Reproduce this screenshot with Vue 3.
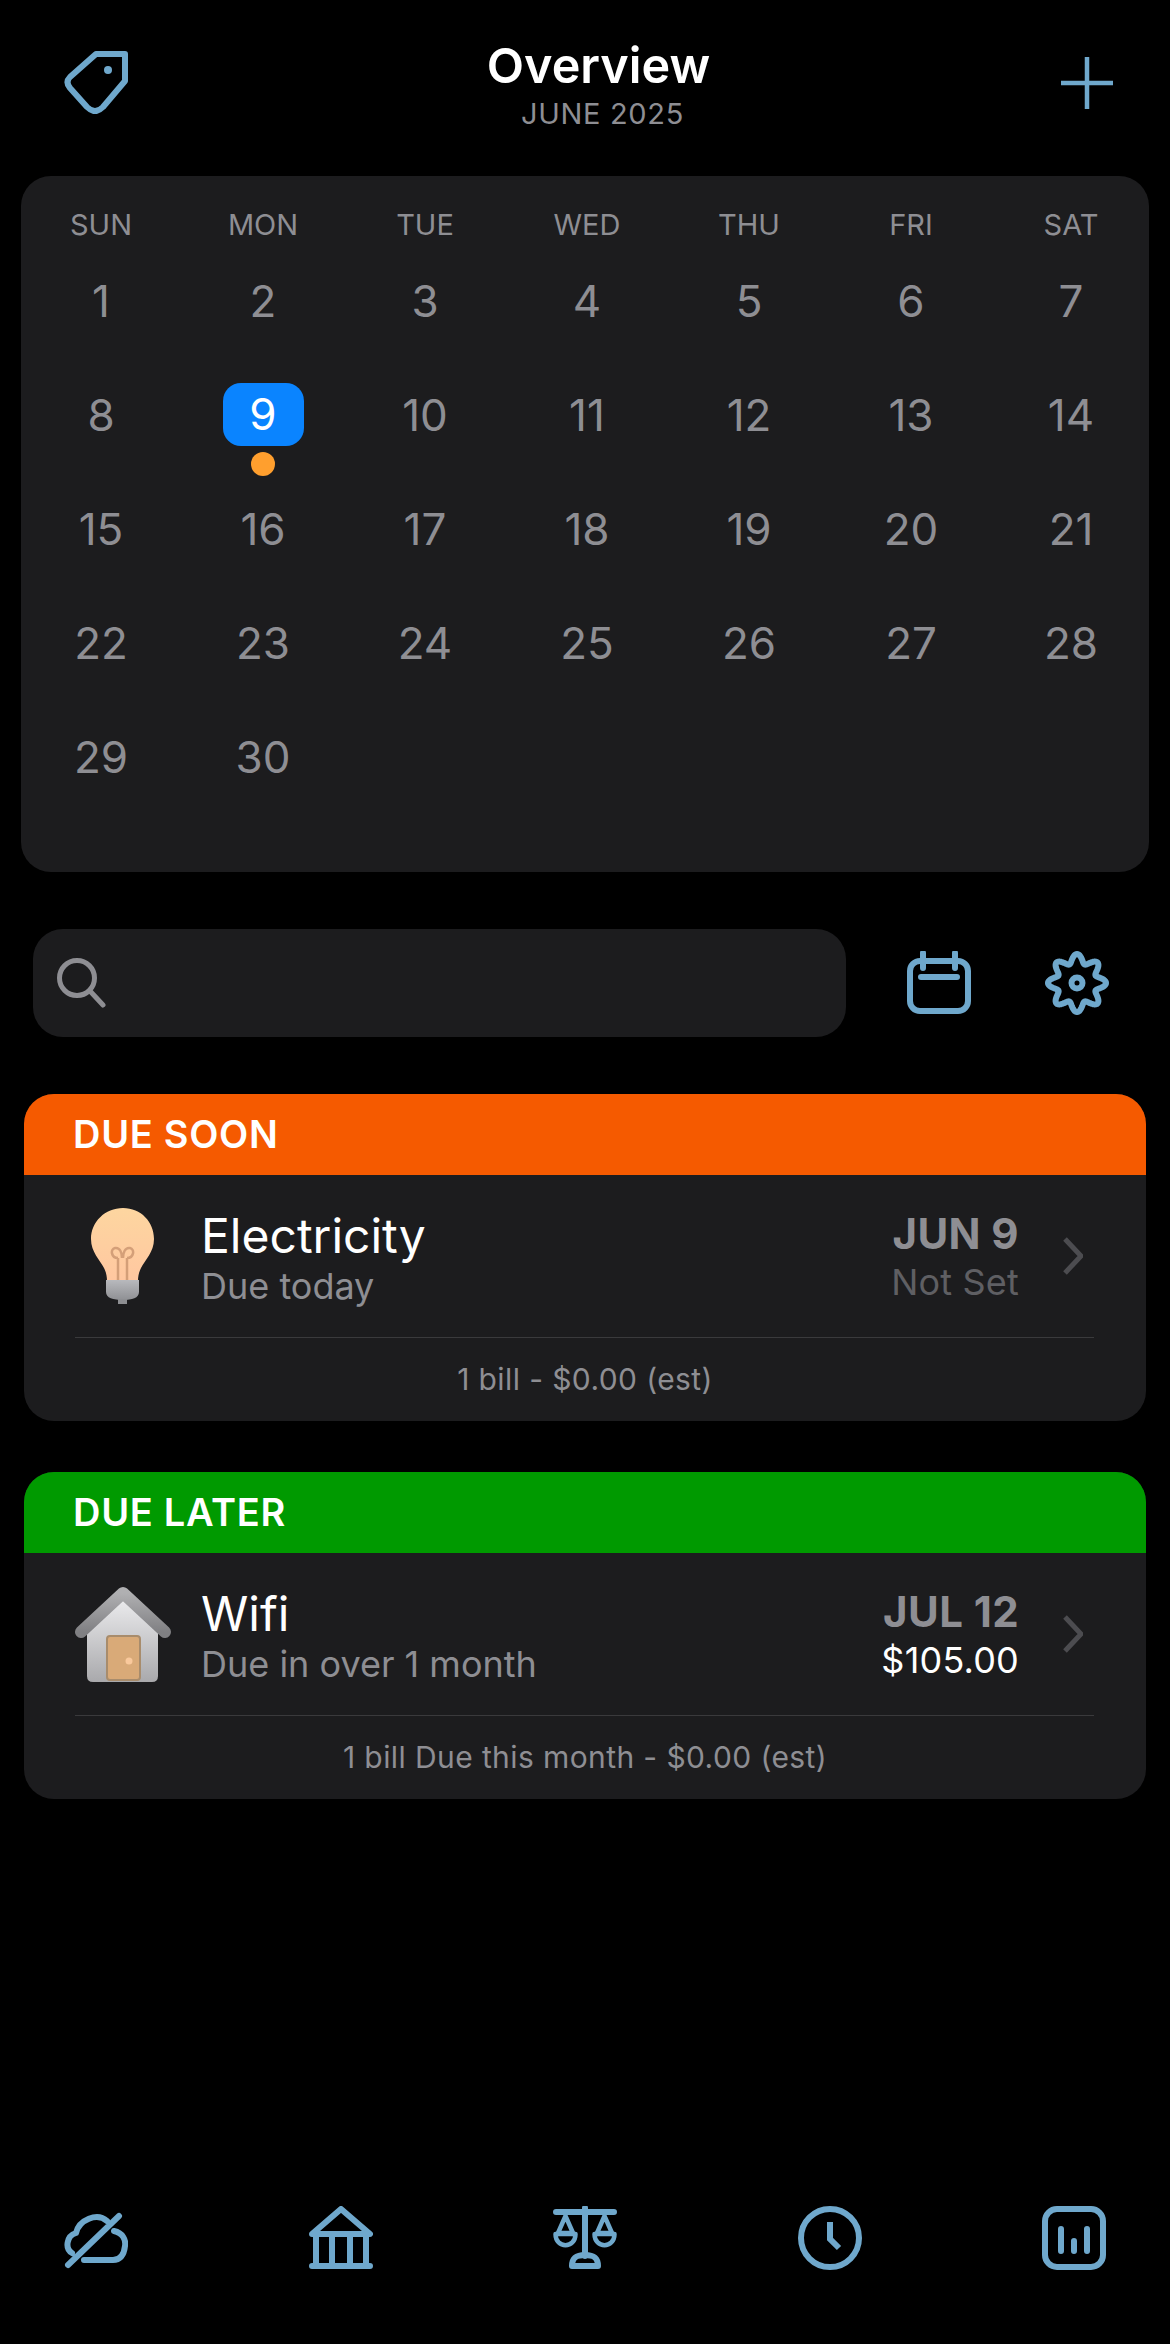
<script setup>
const weekdays = ['SUN', 'MON', 'TUE', 'WED', 'THU', 'FRI', 'SAT']
const days = Array.from({ length: 30 }, (_, i) => i + 1)

const gearPath = (() => {
  const pts = []
  for (let i = 0; i < 240; i++) {
    const t = (i / 240) * Math.PI * 2
    const r = 24.5 + 4.5 * Math.cos(8 * t)
    pts.push(`${(32 + r * Math.sin(t)).toFixed(2)} ${(32 - r * Math.cos(t)).toFixed(2)}`)
  }
  return 'M' + pts.join('L') + 'Z'
})()
</script>

<template>
  <div class="screen">
    <header class="top">
      <svg class="ico" viewBox="0 0 64 64">
        <path d="M32 4H61V31L39 57Q31 65 23 57L6 38Q1 32 6 27Z" />
        <circle class="solid" cx="44" cy="20" r="4" />
      </svg>
      <div class="heading">
        <div class="title">Overview</div>
        <div class="month">JUNE 2025</div>
      </div>
      <svg class="plus" viewBox="0 0 52 52">
        <path d="M26 0V52M0 26H52" />
      </svg>
    </header>

    <section class="calendar">
      <div class="grid week">
        <div v-for="w in weekdays" :key="w" class="wd">{{ w }}</div>
      </div>
      <div class="grid">
        <div v-for="d in days" :key="d" class="day">
          <span class="num" :class="{ today: d === 9 }">{{ d }}</span>
          <span v-if="d === 9" class="dot"></span>
        </div>
      </div>
    </section>

    <section class="tools">
      <div class="search">
        <svg class="mag" viewBox="0 0 50 50">
          <circle cx="20" cy="20" r="17.500" />
          <path d="M33 33L46 47" />
        </svg>
      </div>
      <svg class="ico" viewBox="0 0 64 64">
        <rect x="3" y="10" width="58" height="50" rx="10" />
        <path d="M16 2V17M48 2V17M14 26H50" />
      </svg>
      <svg class="ico" viewBox="0 0 64 64">
        <path :d="gearPath" />
        <circle cx="32" cy="32" r="5.500" />
      </svg>
    </section>

    <section class="card soon">
      <div class="band orange">DUE SOON</div>
      <div class="row">
        <div class="thumb">
          <svg class="bulb" viewBox="0 0 64 96">
            <defs>
              <linearGradient id="glass" x1="0" y1="0" x2="0" y2="1">
                <stop offset="0" stop-color="#fdd6a0" />
                <stop offset="1" stop-color="#ffc7a0" />
              </linearGradient>
              <linearGradient id="cap" x1="0" y1="0" x2="0" y2="1">
                <stop offset="0" stop-color="#b8b9bd" />
                <stop offset="1" stop-color="#8f9094" />
              </linearGradient>
            </defs>
            <path d="M32 0C50 0 63 14 63 31C63 44 54 52 50 60C48 64 47 68 47 73H16C16 68 15 64 13 60C9 52 0 44 0 31C0 14 14 0 32 0Z" fill="url(#glass)" />
            <path d="M27 73V50M36 73V50M27 50C20 50 19 41 24 40C29 39 31 45 31 50M36 50C43 50 44 41 39 40C34 39 32 45 32 50" fill="none" stroke="#d49f78" stroke-width="2.500" />
            <path d="M15 72H48V84C48 90 41 92 32 92C22 92 15 90 15 84Z" fill="url(#cap)" />
            <rect x="27" y="91" width="9" height="5" fill="#8d8e92" />
          </svg>
        </div>
        <div class="info">
          <div class="name">Electricity</div>
          <div class="sub">Due today</div>
        </div>
        <div class="due">
          <div class="date">JUN 9</div>
          <div class="amount muted">Not Set</div>
        </div>
        <svg class="chev" viewBox="0 0 20 38">
          <path d="M2 2L18 19L2 36" />
        </svg>
      </div>
      <div class="rule"></div>
      <div class="foot">1 bill - $0.00 (est)</div>
    </section>

    <section class="card later">
      <div class="band green">DUE LATER</div>
      <div class="row">
        <div class="thumb">
          <svg class="house" viewBox="0 0 96 96">
            <defs>
              <linearGradient id="wall" x1="0" y1="0" x2="0" y2="1">
                <stop offset="0" stop-color="#ececee" />
                <stop offset="1" stop-color="#a9a9ac" />
              </linearGradient>
              <linearGradient id="roof" x1="0" y1="0" x2="0" y2="1">
                <stop offset="0" stop-color="#b0b0b2" />
                <stop offset="1" stop-color="#808083" />
              </linearGradient>
            </defs>
            <path d="M12 46L48 12L83 46V90Q83 96 77 96H18Q12 96 12 90Z" fill="url(#wall)" />
            <path d="M6 46L48 7L90 46" fill="none" stroke="url(#roof)" stroke-width="12" stroke-linecap="round" stroke-linejoin="round" />
            <rect x="32" y="50" width="33" height="44" rx="3" fill="#d9aa78" stroke="#a88c6c" stroke-width="2" />
            <circle cx="54" cy="75" r="3.500" fill="#f9c99c" />
          </svg>
        </div>
        <div class="info">
          <div class="name">Wifi</div>
          <div class="sub">Due in over 1 month</div>
        </div>
        <div class="due">
          <div class="date">JUL 12</div>
          <div class="amount">$105.00</div>
        </div>
        <svg class="chev" viewBox="0 0 20 38">
          <path d="M2 2L18 19L2 36" />
        </svg>
      </div>
      <div class="rule"></div>
      <div class="foot">1 bill Due this month - $0.00 (est)</div>
    </section>

    <nav class="tabs">
      <svg class="ico" viewBox="0 0 64 64">
        <path d="M8 47C1 43 2 30 12 27C15 14 33 6 43 15M50 25C59 27 62 34 61 40C60 49 56 54 49 54H20M4 59L55 10" />
      </svg>
      <svg class="ico" viewBox="0 0 64 64">
        <path d="M3 28L32 3L61 28ZM7 28V60M23 28V60M41 28V60M57 28V60M3 60H61" />
      </svg>
      <svg class="ico" viewBox="0 0 64 64">
        <path d="M3 6H61M32 2V50M19 60C19 51 24 49 32 49C40 49 45 51 45 60Z" />
        <path class="thin" d="M12.500 10L5 27H20ZM51.500 10L44 27H59Z" />
        <path class="thin" d="M2.500 28H22.500C22.500 43 2.500 43 2.500 28ZM41.500 28H61.500C61.500 43 41.500 43 41.500 28Z" />
      </svg>
      <svg class="ico" viewBox="0 0 64 64">
        <circle cx="32" cy="32" r="29" />
        <path class="butt" d="M32 16V33L41 42" />
      </svg>
      <svg class="ico" viewBox="0 0 64 64">
        <rect x="3" y="3" width="58" height="58" rx="12" />
        <path d="M19 23V45M32 35V45M45 23V45" />
      </svg>
    </nav>
  </div>
</template>

<style>
html,
body {
  background: #000;
}
</style>

<style scoped>
.screen {
  width: 1170px;
  height: 2344px;
  background: #000;
  display: flex;
  flex-direction: column;
  font-family: Inter, "Liberation Sans", sans-serif;
  overflow: hidden;
}

.ico {
  width: 64px;
  height: 64px;
  flex: none;
  fill: none;
  stroke: #6fa8cc;
  stroke-width: 6;
  stroke-linecap: round;
  stroke-linejoin: round;
}
.ico .solid {
  fill: #6fa8cc;
  stroke: none;
}
.ico .thin {
  stroke-width: 4.5;
}
.ico .butt {
  stroke-linecap: butt;
  stroke-linejoin: miter;
}

.top {
  height: 176px;
  box-sizing: border-box;
  padding: 50px 57px 0 64px;
  display: flex;
  justify-content: space-between;
  align-items: flex-start;
}
.heading {
  margin: -14px 0 0 8px;
  text-align: center;
}
.title {
  font-size: 48.5px;
  font-weight: 600;
  line-height: 60px;
  color: #fff;
}
.month {
  font-size: 29px;
  line-height: 36px;
  color: #8e8e93;
  margin-left: 8px;
  letter-spacing: 0.7px;
}
.plus {
  width: 52px;
  height: 52px;
  margin-top: 7px;
  fill: none;
  stroke: #6fa8cc;
  stroke-width: 4.5;
  stroke-linecap: round;
}

.calendar {
  margin: 0 21px;
  height: 696px;
  flex: none;
  box-sizing: border-box;
  padding-top: 31px;
  background: #1c1c1e;
  border-radius: 30px;
}
.grid {
  display: grid;
  grid-template-columns: repeat(6, 162px) 158px;
  margin-left: -1px;
}
.week {
  margin-bottom: 1px;
}
.wd {
  text-align: center;
  font-size: 29px;
  line-height: 36px;
  color: #8e8e93;
}
.day {
  position: relative;
  height: 114px;
  display: flex;
  align-items: center;
  justify-content: center;
}
.num {
  width: 81px;
  height: 63px;
  display: flex;
  align-items: center;
  justify-content: center;
  font-size: 44px;
  color: #8e8e93;
  border-radius: 18px;
}
.today {
  background: #0a84ff;
  color: #fff;
  margin-bottom: 2px;
}
.dot {
  position: absolute;
  left: 50%;
  top: 94px;
  width: 24px;
  height: 24px;
  margin-left: -12px;
  border-radius: 50%;
  background: #ff9f2e;
}

.tools {
  margin: 57px 0 0 33px;
  display: flex;
  align-items: center;
}
.search {
  width: 813px;
  height: 108px;
  box-sizing: border-box;
  padding-left: 24px;
  display: flex;
  align-items: center;
  background: #1c1c1e;
  border-radius: 30px;
  margin-right: 61px;
}
.tools .ico + .ico {
  margin-left: 74px;
}
.mag {
  width: 50px;
  height: 50px;
  fill: none;
  stroke: #8e8e93;
  stroke-width: 5;
  stroke-linecap: round;
}

.card {
  margin: 0 24px;
  background: #1c1c1e;
  border-radius: 30px;
  overflow: hidden;
  flex: none;
  height: 327px;
}
.soon {
  margin-top: 57px;
}
.later {
  margin-top: 51px;
}
.band {
  height: 81px;
  box-sizing: border-box;
  padding: 0 0 2px 49px;
  display: flex;
  align-items: center;
  font-size: 38px;
  font-weight: 600;
  letter-spacing: 0.7px;
  color: #fff;
}
.orange {
  background: #f55a00;
}
.green {
  background: #009a00;
}
.row {
  height: 162px;
  box-sizing: border-box;
  padding: 0 63px 0 51px;
  display: flex;
  align-items: center;
}
.thumb {
  width: 96px;
  height: 96px;
  flex: none;
  display: flex;
  justify-content: center;
  margin-right: 30px;
}
.bulb {
  width: 64px;
  height: 96px;
}
.house {
  width: 96px;
  height: 96px;
}
.info {
  flex: 1;
  padding-top: 9px;
}
.name {
  font-size: 48px;
  line-height: 51px;
  color: #fff;
}
.sub {
  font-size: 36px;
  line-height: 51px;
  color: #8e8e93;
}
.due {
  text-align: right;
  padding-top: 4px;
}
.date {
  font-size: 42px;
  font-weight: 700;
  line-height: 48px;
  letter-spacing: 0.4px;
  color: #8e8e93;
}
.amount {
  font-size: 36px;
  line-height: 48px;
  letter-spacing: 0.2px;
  color: #fff;
}
.muted {
  color: #5f5f63;
}
.chev {
  width: 20px;
  height: 38px;
  margin-left: 44px;
  fill: none;
  stroke: #4c4c50;
  stroke-width: 5;
}
.rule {
  height: 1px;
  margin: 0 52px 0 51px;
  background: #3a3a3c;
}
.foot {
  height: 84px;
  box-sizing: border-box;
  padding-bottom: 2px;
  display: flex;
  align-items: center;
  justify-content: center;
  font-size: 30px;
  letter-spacing: 0.4px;
  color: #8e8e93;
}

.tabs {
  margin-top: auto;
  padding: 0 64px 74px;
  display: flex;
  justify-content: space-between;
}
</style>
